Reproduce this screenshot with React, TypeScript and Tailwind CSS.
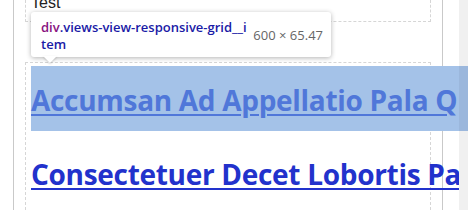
const headings = ['Accumsan Ad Appellatio Pala Q', 'Consectetuer Decet Lobortis Pat'];

export default function App() {
  return (
    <div className="relative flex h-[210px] w-[468px] overflow-hidden bg-white font-['Open_Sans',sans-serif]">
      <div className="w-[459px] shrink-0 pl-[13px]">
        <div className="flex h-[210px] w-[430px] flex-col border-x border-[#c9c9c9] pl-[11px] pr-[11px]">
          <div className="flex h-[22px] flex-col border-b border-l border-r border-dashed border-[#d6d6d6] pl-[5px]">
            <p className="-mt-[7px] text-[16px] leading-[20px] text-[#222] font-['Liberation_Sans',sans-serif]">Test</p>
          </div>
          <div className="mt-[40px] flex-1 border-l border-r border-t border-dashed border-[#d6d6d6] pl-[5px] pt-[3px]">
            <div className="flex flex-col gap-[9px]">
              {headings.map((h, i) => (
                <div key={h} className={`relative h-[65px] w-[600px] ${i === 0 ? 'bg-[#a4c2e8]' : ''}`}>
                  <h2
                    className={`whitespace-nowrap pt-[17px] text-[28px] font-bold leading-[34px] tracking-[-0.3px] underline decoration-2 underline-offset-[3px] ${
                      i === 0 ? 'text-[#5077d9]' : 'text-[#2232cc]'
                    }`}
                  >
                    <a>{h}</a>
                  </h2>
                </div>
              ))}
            </div>
          </div>
        </div>
      </div>
      <div className="relative z-10 flex-1 bg-[#f0f0f0]" />

      {/* highlight spill over scrollbar strip */}
      <div className="absolute left-[459px] top-[66px] z-20 h-[65px] w-[9px] bg-[#9bb7dc]" />

      {/* inspector tooltip */}
      <div className="absolute left-[31px] top-[12px] z-30 flex h-[45px] w-[300px] items-center justify-between rounded-[3px] bg-white pl-[10px] pr-[8px] shadow-[0_1px_5px_rgba(0,0,0,0.3)]">
        <div className="whitespace-nowrap pt-[2px] text-[13px] font-semibold leading-[17px] text-[#1a1aa6]">
          <div>
            <span className="text-[#881280]">div</span>.views-view-responsive-grid__i
          </div>
          <div>tem</div>
        </div>
        <span className="whitespace-nowrap pt-[3px] text-[13px] text-[#666]">600 × 65.47</span>
      </div>
      <div className="absolute left-[43px] top-[56px] z-30 h-0 w-0 border-x-[7px] border-t-[7px] border-x-transparent border-t-white drop-shadow-[0_1px_1px_rgba(0,0,0,0.2)]" />
    </div>
  );
}
